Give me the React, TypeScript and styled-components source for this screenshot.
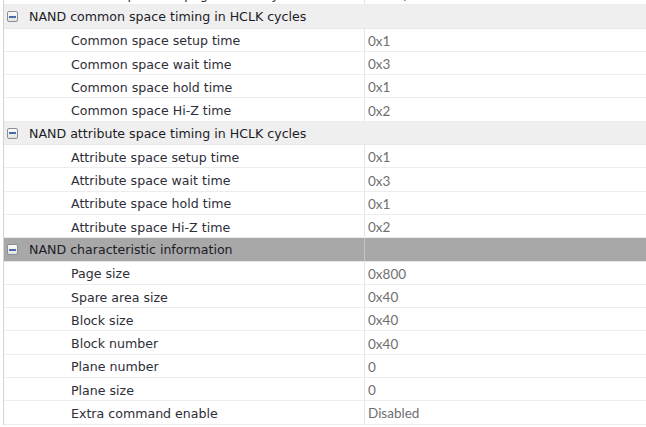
import React from "react";
import styled, { createGlobalStyle } from "styled-components";

const Global = createGlobalStyle`
  html, body {
    margin: 0;
    padding: 0;
    background: #fff;
    overflow: hidden;
  }
  body {
    font-family: "DejaVu Sans", "Noto Sans", sans-serif;
  }
`;

const Frame = styled.div`
  width: 646px;
  height: 427px;
  overflow: hidden;
  padding-left: 3px;
  box-sizing: border-box;
`;

const Grid = styled.div`
  margin-top: -18px;
  border-left: 1px solid #d4d4d4;
  width: 642px;
`;

const Row = styled.div`
  display: grid;
  grid-template-columns: 361px 1fr;
  height: 23.3px;
  box-sizing: border-box;
  border-bottom: 1px solid #ededed;
  background: #fff;
`;

const Label = styled.div`
  padding-left: 67px;
  padding-top: 2px;
  display: flex;
  align-items: center;
  font-size: 12.6px;
  color: #2e2e38;
  white-space: nowrap;
  border-right: 1px solid #e6e6e6;
`;

const Value = styled.div`
  padding-left: 3px;
  padding-top: 2px;
  display: flex;
  align-items: center;
  font-family: "Lato", "Open Sans", sans-serif;
  font-size: 13.5px;
  color: #6f6f6f;
  white-space: nowrap;
`;

const Group = styled.div<{ $selected?: boolean }>`
  display: grid;
  grid-template-columns: 361px 1fr;
  height: 23.3px;
  box-sizing: border-box;
  background: ${(p) => (p.$selected ? "#a8a8a8" : "#efefef")};
  border-bottom: 1px solid ${(p) => (p.$selected ? "#e4e4e4" : "#e9e9e9")};
`;

const GroupTitle = styled.div<{ $selected?: boolean }>`
  display: flex;
  align-items: center;
  gap: 11px;
  padding-left: 3px;
  padding-top: 1px;
  font-size: 12.6px;
  color: #1c1c28;
  white-space: nowrap;
  border-right: 1px solid ${(p) => (p.$selected ? "#c4c4c4" : "transparent")};
`;

const Toggle = styled.span`
  width: 11px;
  height: 11px;
  box-sizing: border-box;
  border: 1px solid #8c8c94;
  border-radius: 2px;
  background: linear-gradient(#fdfdfd, #e2e2e6);
  display: flex;
  align-items: center;
  justify-content: center;
  flex: none;

  &::after {
    content: "";
    width: 7px;
    height: 2px;
    background: #4a6aa8;
  }
`;

type Item = [string, string];

const groups: { title: string; selected?: boolean; items: Item[] }[] = [
  {
    title: "NAND common space timing in HCLK cycles",
    items: [
      ["Common space setup time", "0x1"],
      ["Common space wait time", "0x3"],
      ["Common space hold time", "0x1"],
      ["Common space Hi-Z time", "0x2"],
    ],
  },
  {
    title: "NAND attribute space timing in HCLK cycles",
    items: [
      ["Attribute space setup time", "0x1"],
      ["Attribute space wait time", "0x3"],
      ["Attribute space hold time", "0x1"],
      ["Attribute space Hi-Z time", "0x2"],
    ],
  },
  {
    title: "NAND characteristic information",
    selected: true,
    items: [
      ["Page size", "0x800"],
      ["Spare area size", "0x40"],
      ["Block size", "0x40"],
      ["Block number", "0x40"],
      ["Plane number", "0"],
      ["Plane size", "0"],
      ["Extra command enable", "Disabled"],
    ],
  },
];

export default function App() {
  return (
    <Frame>
      <Global />
      <Grid>
        <Row>
          <Label>ECC computation page size in bytes</Label>
          <Value>512 bytes</Value>
        </Row>
        {groups.map((g) => (
          <React.Fragment key={g.title}>
            <Group $selected={g.selected}>
              <GroupTitle $selected={g.selected}>
                <Toggle />
                {g.title}
              </GroupTitle>
              <div />
            </Group>
            {g.items.map(([name, val]) => (
              <Row key={name}>
                <Label>{name}</Label>
                <Value>{val}</Value>
              </Row>
            ))}
          </React.Fragment>
        ))}
      </Grid>
    </Frame>
  );
}
